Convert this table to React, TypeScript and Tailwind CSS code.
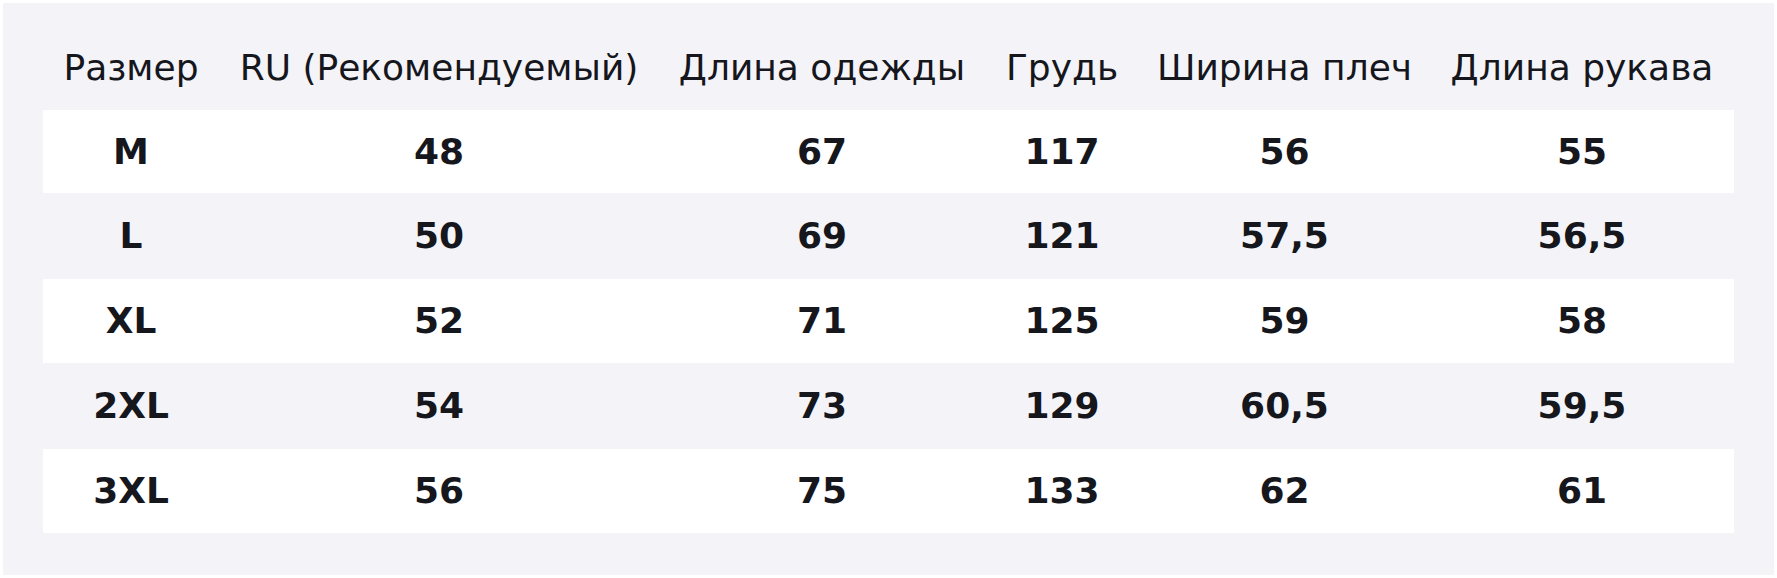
const headers = [
  "Размер",
  "RU (Рекомендуемый)",
  "Длина одежды",
  "Грудь",
  "Ширина плеч",
  "Длина рукава",
];

const rows = [
  { cells: ["M", "48", "67", "117", "56", "55"], h: "h-[83px]", bg: "bg-white" },
  { cells: ["L", "50", "69", "121", "57,5", "56,5"], h: "h-[86px]", bg: "" },
  { cells: ["XL", "52", "71", "125", "59", "58"], h: "h-[84px]", bg: "bg-white" },
  { cells: ["2XL", "54", "73", "129", "60,5", "59,5"], h: "h-[86px]", bg: "" },
  { cells: ["3XL", "56", "75", "133", "62", "61"], h: "h-[84px]", bg: "bg-white" },
];

const grid = "grid grid-cols-[176px_440px_326px_154px_291px_304px]";

export default function App() {
  return (
    <div className="w-[1777px] h-[578px] bg-white p-[3px] font-['DejaVu_Sans',sans-serif] text-[#16161d]">
      <div className="h-full bg-[#f4f4f8] px-[40px] pt-[40px] pb-[42px]">
        {/* header */}
        <div className={`${grid} h-[67px]`}>
          {headers.map((h) => (
            <div key={h} className="pt-[4px] text-center text-[36px] leading-[42px] whitespace-nowrap">
              {h}
            </div>
          ))}
        </div>

        {/* body */}
        {rows.map((r) => (
          <div key={r.cells[0]} className={`${grid} ${r.h} ${r.bg} items-center`}>
            {r.cells.map((c, i) => (
              <div key={i} className="text-center text-[36px] font-bold leading-[42px]">
                {c}
              </div>
            ))}
          </div>
        ))}
      </div>
    </div>
  );
}
